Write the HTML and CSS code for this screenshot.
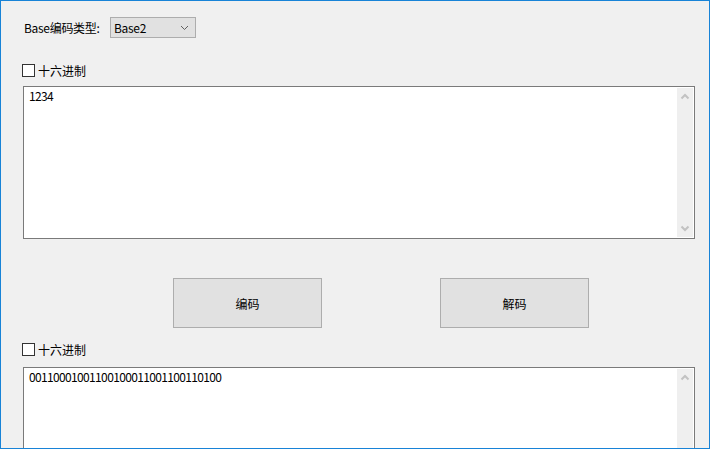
FILE: index.html
```html
<!DOCTYPE html>
<html lang="zh-CN">
<head>
<meta charset="utf-8">
<title>Base编码</title>
<link rel="stylesheet" href="styles.css">
</head>
<body>
<div class="window">
  <div class="type-row">
    <span class="type-label">Base编码类型:</span>
    <div class="combo">
      <span class="combo-value">Base2</span>
      <svg class="combo-arrow" width="9" height="6" viewBox="0 0 9 6"><path d="M1 1 L4.5 4.5 L8 1" fill="none" stroke="#606060" stroke-width="1"/></svg>
    </div>
  </div>

  <label class="check check-first"><span class="box"></span><span class="check-text">十六进制</span></label>

  <div class="textbox textbox-first">
    <div class="textbox-content">1234</div>
    <div class="scrollbar">
      <svg class="sb-arrow" width="16" height="17" viewBox="0 0 16 17"><path d="M4.5 10.5 L8 7 L11.5 10.5" fill="none" stroke="#c2c2c2" stroke-width="2"/></svg>
      <svg class="sb-arrow" width="16" height="17" viewBox="0 0 16 17"><path d="M4.5 6.5 L8 10 L11.5 6.5" fill="none" stroke="#c2c2c2" stroke-width="2"/></svg>
    </div>
  </div>

  <div class="buttons">
    <button class="btn btn-encode">编码</button>
    <button class="btn btn-decode">解码</button>
  </div>

  <label class="check check-second"><span class="box"></span><span class="check-text">十六进制</span></label>

  <div class="textbox textbox-second">
    <div class="textbox-content">00110001001100100011001100110100</div>
    <div class="scrollbar">
      <svg class="sb-arrow" width="16" height="17" viewBox="0 0 16 17"><path d="M4.5 10.5 L8 7 L11.5 10.5" fill="none" stroke="#c2c2c2" stroke-width="2"/></svg>
      <svg class="sb-arrow" width="16" height="17" viewBox="0 0 16 17"><path d="M4.5 6.5 L8 10 L11.5 6.5" fill="none" stroke="#c2c2c2" stroke-width="2"/></svg>
    </div>
  </div>
</div>
</body>
</html>
```

FILE: styles.css
```css
html, body {
  margin: 0;
  padding: 0;
  background: #f0f0f0;
}

body {
  font-family: "Noto Sans CJK SC", "Noto Sans", sans-serif;
  font-size: 12px;
  color: #000;
}

.window {
  box-sizing: border-box;
  width: 710px;
  height: 449px;
  border: 1px solid #1883d7;
  background: #f0f0f0;
  padding: 0 14px 0 22px;
  overflow: hidden;
  display: flex;
  flex-direction: column;
}

.type-row {
  display: flex;
  align-items: center;
  height: 21px;
  margin-top: 16px;
  flex: none;
}

.type-label {
  width: 86px;
  margin-left: 1px;
  line-height: 21px;
  letter-spacing: -0.3px;
}

.combo {
  box-sizing: border-box;
  width: 86px;
  height: 21px;
  border: 1px solid #adadad;
  background: #e1e1e1;
  display: flex;
  align-items: center;
  justify-content: space-between;
  padding: 0 6px 0 3px;
}

.combo-value {
  line-height: 19px;
  letter-spacing: -0.3px;
}

.combo-arrow {
  display: block;
}

.check {
  display: flex;
  align-items: center;
  height: 13px;
  margin-left: -1px;
  flex: none;
}

.check-first {
  margin-top: 26px;
}

.check-second {
  margin-top: 15px;
}

.box {
  box-sizing: border-box;
  width: 13px;
  height: 13px;
  border: 1px solid #333;
  background: #fff;
  margin-right: 3px;
}

.check-text {
  font-size: 12px;
  line-height: 13px;
}

.textbox {
  box-sizing: border-box;
  width: 672px;
  height: 153px;
  border: 1px solid #7a7a7a;
  background: #fff;
  display: flex;
  flex: none;
}

.textbox-first {
  margin-top: 9px;
}

.textbox-second {
  margin-top: 11px;
}

.textbox-content {
  flex: 1;
  padding: 2px 5px;
  line-height: 14px;
  letter-spacing: -0.65px;
}

.scrollbar {
  width: 16px;
  margin: 1px 1px 1px 0;
  background: #efefef;
  display: flex;
  flex-direction: column;
  justify-content: space-between;
}

.sb-arrow {
  display: block;
}

.buttons {
  display: flex;
  height: 50px;
  margin-top: 39px;
  padding-left: 150px;
  gap: 118px;
  flex: none;
}

.btn {
  box-sizing: border-box;
  width: 149px;
  height: 50px;
  border: 1px solid #adadad;
  background: #e1e1e1;
  font-family: inherit;
  font-size: 12px;
  color: #000;
  padding: 0;
  margin: 0;
  border-radius: 0;
}
```
